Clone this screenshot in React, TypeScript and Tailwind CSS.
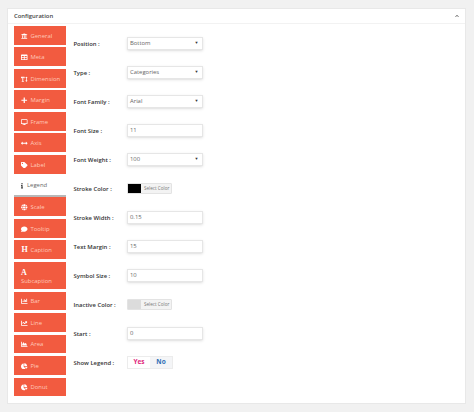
import type { ReactNode } from "react";
import {
  FaArrowsAltH,
  FaChartArea,
  FaChartBar,
  FaChartLine,
  FaChartPie,
  FaChevronUp,
  FaComment,
  FaDesktop,
  FaGlobe,
  FaInfo,
  FaPlus,
  FaTable,
  FaTag,
  FaTextHeight,
  FaUniversity,
} from "react-icons/fa";

const serifIcon = "font-['Liberation_Serif',serif] text-[8px] leading-none font-bold";

const tabs: { label: string; icon: ReactNode; active?: boolean; tall?: boolean }[] = [
  { label: "General", icon: <FaUniversity /> },
  { label: "Meta", icon: <FaTable /> },
  { label: "Dimension", icon: <FaTextHeight /> },
  { label: "Margin", icon: <FaPlus /> },
  { label: "Frame", icon: <FaDesktop /> },
  { label: "Axis", icon: <FaArrowsAltH /> },
  { label: "Label", icon: <FaTag /> },
  { label: "Legend", icon: <FaInfo />, active: true },
  { label: "Scale", icon: <FaGlobe /> },
  { label: "Tooltip", icon: <FaComment /> },
  { label: "Caption", icon: <span className={serifIcon}>H</span> },
  { label: "Subcaption", icon: <span className={serifIcon}>A</span>, tall: true },
  { label: "Bar", icon: <FaChartBar /> },
  { label: "Line", icon: <FaChartLine /> },
  { label: "Area", icon: <FaChartArea /> },
  { label: "Pie", icon: <FaChartPie /> },
  { label: "Donut", icon: <FaChartPie /> },
];

function TabButton({ label, icon, active, tall }: (typeof tabs)[number]) {
  if (active) {
    return (
      <div className="-mb-[2.8px] flex h-[21px] items-center gap-[3px] border-b-2 border-[#b8b8b8] bg-white pl-[6px] text-[5.9px] text-[#666]">
        <span className="flex w-[4px] justify-center text-[5.5px] text-[#444]">{icon}</span>
        {label}
      </div>
    );
  }
  if (tall) {
    return (
      <div className="flex h-[27px] flex-col justify-center bg-[#f25b40] pt-[3px] pl-[7px] text-[5.9px] leading-[8px] text-[#ffc9ba]">
        <span className="text-white">{icon}</span>
        {label}
      </div>
    );
  }
  return (
    <div className="flex h-[18.7px] items-center gap-[2.5px] bg-[#f25b40] pt-[1.5px] pl-[7px] text-[5.9px] text-[#ffc9ba]">
      <span className="flex w-[7px] justify-center text-[6.5px] text-white">{icon}</span>
      {label}
    </div>
  );
}

function Row({ label, children }: { label: string; children: ReactNode }) {
  return (
    <div className="flex h-[13px] items-center">
      <span className="w-[53.5px] pt-[2px] text-[5.9px] font-semibold text-[#333]">{label}</span>
      {children}
    </div>
  );
}

function Field({ value }: { value: string }) {
  return (
    <div className="flex h-[13px] w-[75.5px] items-center border border-[#e6e6e6] bg-white pl-[2px] text-[5.9px] text-[#666] shadow-sm">
      {value}
    </div>
  );
}

function Select({ value }: { value: string }) {
  return (
    <div className="flex h-[13px] w-[75.5px] items-center justify-between border border-[#e6e6e6] bg-white pr-[3px] pl-[2px] text-[5.9px] text-[#666] shadow-sm">
      {value}
      <span className="text-[4px] text-[#333]">▼</span>
    </div>
  );
}

function ColorPick({ color }: { color: string }) {
  return (
    <div className="flex h-[11px] w-[45px] items-center rounded-[1px] border border-[#e3e3e3] bg-[#f3f3f3] text-[4.6px] text-[#777]">
      <span className={`h-full w-[13px] ${color}`} />
      <span className="pl-[3px] whitespace-nowrap">Select Color</span>
    </div>
  );
}

export default function App() {
  return (
    <div className="h-[412px] w-[474px] bg-[#f1f1f1] pt-[8px] pl-[7px] font-['Open_Sans',sans-serif]">
      <div className="h-[396px] w-[459px] border border-[#e8e8e8] bg-white">
        <div className="flex h-[15px] items-center justify-between border-b border-[#f2f2f2] px-[6px]">
          <span className="text-[5.9px] font-semibold text-[#444]">Configuration</span>
          <FaChevronUp className="text-[4px] text-[#555]" />
        </div>
        <div className="flex pt-[2px] pl-[6px]">
          <div className="flex w-[52px] flex-col gap-[2.8px]">
            {tabs.map((tab) => (
              <TabButton key={tab.label} {...tab} />
            ))}
          </div>
          <div className="flex flex-col gap-[16px] pt-[10.5px] pl-[7.5px]">
            <Row label="Position :"><Select value="Bottom" /></Row>
            <Row label="Type :"><Select value="Categories" /></Row>
            <Row label="Font Family :"><Select value="Arial" /></Row>
            <Row label="Font Size :"><Field value="11" /></Row>
            <Row label="Font Weight :"><Select value="100" /></Row>
            <Row label="Stroke Color :"><ColorPick color="bg-black" /></Row>
            <Row label="Stroke Width :"><Field value="0.15" /></Row>
            <Row label="Text Margin :"><Field value="15" /></Row>
            <Row label="Symbol Size :"><Field value="10" /></Row>
            <Row label="Inactive Color :"><ColorPick color="bg-[#dcdcdc]" /></Row>
            <Row label="Start :"><Field value="0" /></Row>
            <Row label="Show Legend :">
              <div className="flex h-[13px] w-[46px] border border-[#ececec] text-[6.5px] font-bold">
                <span className="flex flex-1 items-center justify-center bg-white text-[#e0287d]">Yes</span>
                <span className="flex w-[22px] items-center justify-center bg-[#f4f5f7] text-[#2f6db5]">No</span>
              </div>
            </Row>
          </div>
        </div>
      </div>
    </div>
  );
}
